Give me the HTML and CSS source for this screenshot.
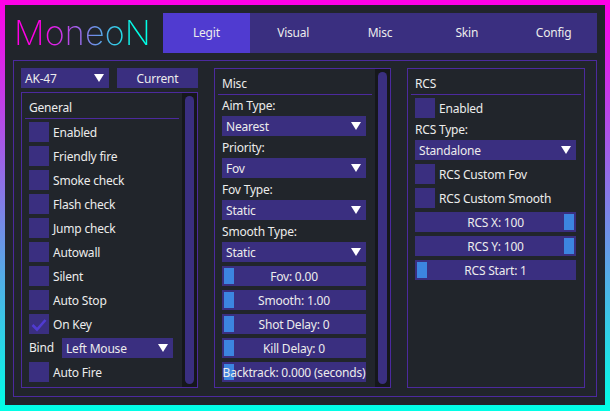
FILE: index.html
```html
<!DOCTYPE html>
<html lang="en">
<head>
<meta charset="utf-8">
<title>MoneoN</title>
<link rel="stylesheet" href="styles.css">
</head>
<body>
<div class="window">
  <header class="header">
    <div class="logo">MoneoN</div>
    <nav class="tabs">
      <div class="tab active">Legit</div>
      <div class="tab">Visual</div>
      <div class="tab">Misc</div>
      <div class="tab">Skin</div>
      <div class="tab">Config</div>
    </nav>
  </header>
  <main class="panel">
    <section class="column">
      <div class="top-row">
        <div class="frame combo weapon"><span>AK-47</span><i class="arrow"></i></div>
        <div class="frame button">Current</div>
      </div>
      <div class="box grow">
        <div class="box-body">
          <div class="title">General</div>
          <div class="stack indent">
            <div class="check"><i class="square"></i><span>Enabled</span></div>
            <div class="check"><i class="square"></i><span>Friendly fire</span></div>
            <div class="check"><i class="square"></i><span>Smoke check</span></div>
            <div class="check"><i class="square"></i><span>Flash check</span></div>
            <div class="check"><i class="square"></i><span>Jump check</span></div>
            <div class="check"><i class="square"></i><span>Autowall</span></div>
            <div class="check"><i class="square"></i><span>Silent</span></div>
            <div class="check"><i class="square"></i><span>Auto Stop</span></div>
            <div class="check"><i class="square"><svg class="tick" viewBox="0 0 20 20"><path d="M3.5 11 L8 15.5 L16.5 6"/></svg></i><span>On Key</span></div>
            <div class="bind"><span class="bind-label">Bind</span><div class="frame combo bind-combo"><span>Left Mouse</span><i class="arrow"></i></div></div>
            <div class="check"><i class="square"></i><span>Auto Fire</span></div>
          </div>
        </div>
        <div class="scrollbar"><div class="thumb"></div></div>
      </div>
    </section>
    <section class="column">
      <div class="box grow">
        <div class="box-body">
          <div class="title">Misc</div>
          <div class="stack wide">
            <div class="label">Aim Type:</div>
            <div class="frame combo"><span>Nearest</span><i class="arrow"></i></div>
            <div class="label">Priority:</div>
            <div class="frame combo"><span>Fov</span><i class="arrow"></i></div>
            <div class="label">Fov Type:</div>
            <div class="frame combo"><span>Static</span><i class="arrow"></i></div>
            <div class="label">Smooth Type:</div>
            <div class="frame combo"><span>Static</span><i class="arrow"></i></div>
            <div class="frame slider"><i class="grab"></i><span>Fov: 0.00</span></div>
            <div class="frame slider"><i class="grab"></i><span>Smooth: 1.00</span></div>
            <div class="frame slider"><i class="grab"></i><span>Shot Delay: 0</span></div>
            <div class="frame slider"><i class="grab"></i><span>Kill Delay: 0</span></div>
            <div class="frame slider"><i class="grab"></i><span>Backtrack: 0.000 (seconds)</span></div>
          </div>
        </div>
        <div class="scrollbar"><div class="thumb"></div></div>
      </div>
    </section>
    <section class="column last">
      <div class="box grow">
        <div class="box-body">
          <div class="title">RCS</div>
          <div class="stack rcs">
            <div class="check"><i class="square"></i><span>Enabled</span></div>
            <div class="label">RCS Type:</div>
            <div class="frame combo"><span>Standalone</span><i class="arrow"></i></div>
            <div class="check"><i class="square"></i><span>RCS Custom Fov</span></div>
            <div class="check"><i class="square"></i><span>RCS Custom Smooth</span></div>
            <div class="frame slider"><i class="grab end"></i><span>RCS X: 100</span></div>
            <div class="frame slider"><i class="grab end"></i><span>RCS Y: 100</span></div>
            <div class="frame slider"><i class="grab"></i><span>RCS Start: 1</span></div>
          </div>
        </div>
      </div>
    </section>
  </main>
</div>
</body>
</html>
```

FILE: styles.css
```css
* { box-sizing: border-box; }
html, body { margin: 0; height: 100%; }
body {
  width: 610px;
  height: 411px;
  padding: 5px 5px 6px;
  overflow: hidden;
  background: linear-gradient(180deg, #ff00e6 0%, #00ffe6 100%);
  font: 12px/18px "Noto Sans", sans-serif;
  letter-spacing: -0.2px;
  color: #ececec;
}
.window {
  width: 600px;
  height: 400px;
  background: #21252b;
  padding: 8px;
  display: flex;
  flex-direction: column;
  gap: 7px;
}
.header { display: flex; height: 40px; gap: 13px; flex: none; }
.logo {
  width: 137px;
  padding-left: 1px;
  font: 250 34px/40px Inter, sans-serif;
  letter-spacing: 0.2px;
  background: linear-gradient(90deg, #ff00e6 29px, #00ffe6 122px);
  -webkit-background-clip: text;
  background-clip: text;
  color: transparent;
}
.tabs { flex: 1; display: flex; background: #3a2f80; }
.tab { flex: 1; display: flex; align-items: center; justify-content: center; }
.tab.active { background: #503bd0; }
.panel {
  flex: 1;
  border: 1px solid #4c2a9e;
  padding: 7px 11px 8px 7px;
  display: flex;
  gap: 16px;
}
.column { width: 177px; flex: none; display: flex; flex-direction: column; gap: 4px; }
.column.last { width: 178px; }
.top-row { display: flex; gap: 8px; }
.frame { height: 20px; background: #3a2f80; flex: none; }
.combo { display: flex; align-items: center; justify-content: space-between; padding: 0 5px 0 4px; }
.weapon { width: 88px; }
.button { flex: 1; text-align: center; line-height: 22px; }
.arrow {
  width: 10px;
  height: 8px;
  background: #fff;
  clip-path: polygon(0 0, 100% 0, 50% 100%);
}
.box { border: 1px solid #4c2a9e; display: flex; min-height: 0; }
.grow { flex: 1; }
.box-body { flex: 1; min-width: 0; padding: 0 3px; }
.title {
  height: 26px;
  line-height: 30px;
  padding-left: 4px;
  border-bottom: 1px solid #4c2a9e;
  margin-bottom: 3px;
}
.stack { display: flex; flex-direction: column; gap: 4px; }
.indent { padding-left: 4px; }
.wide { padding: 0 6px 0 4px; }
.rcs { padding: 0 5px 0 4px; }
.label { height: 14px; line-height: 16px; }
.check { display: flex; align-items: center; gap: 4px; height: 20px; }
.check span, .combo span { padding-top: 2px; }
.square { width: 20px; height: 20px; background: #3a2f80; flex: none; display: block; }
.tick { display: block; width: 20px; height: 20px; fill: none; stroke: #503bd0; stroke-width: 2.6; }
.bind { display: flex; align-items: center; height: 20px; }
.bind-label { width: 33px; flex: none; }
.bind-combo { width: 111px; }
.slider { position: relative; text-align: center; line-height: 22px; white-space: nowrap; }
.slider span { position: relative; }
.grab { position: absolute; left: 2px; top: 2px; width: 10px; height: 16px; background: #3c85e0; }
.grab.end { left: auto; right: 2px; }
.scrollbar { width: 15px; flex: none; background: #15171b; padding: 3px; }
.thumb { height: 100%; background: #3a2f80; border-radius: 5px; width: 9px; }
```
